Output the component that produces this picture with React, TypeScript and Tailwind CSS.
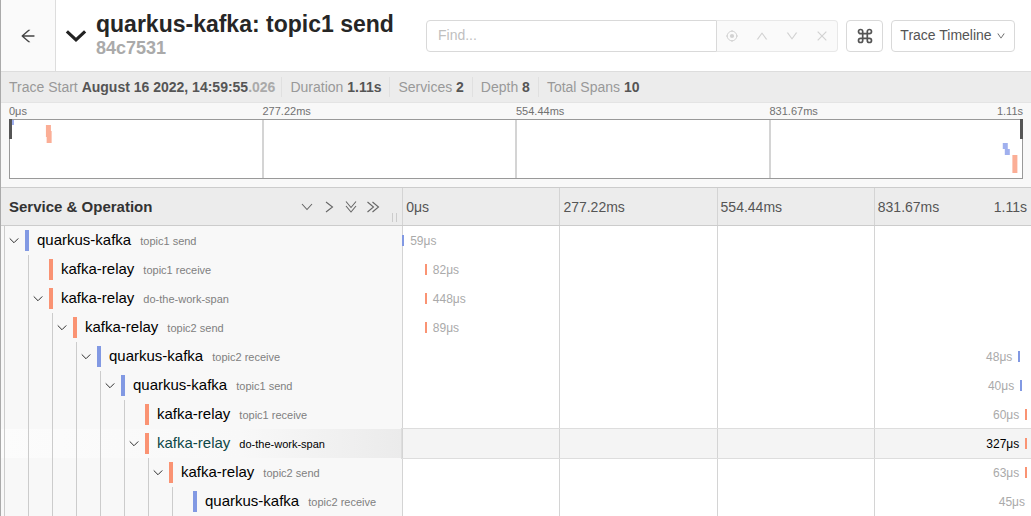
import React from "react";
import { AiOutlineArrowLeft, AiOutlineClose, AiOutlineDown, AiOutlineUp } from "react-icons/ai";

type Service = "quarkus-kafka" | "kafka-relay";

interface Span {
  service: Service;
  operation: string;
  depth: number;
  leaf?: boolean;
  duration: string;
  /** Start of the span as a percentage of the trace. */
  start: number;
  side: "left" | "right";
  active?: boolean;
}

const SPANS: Span[] = [
  { service: "quarkus-kafka", operation: "topic1 send", depth: 0, duration: "59μs", start: 0, side: "right" },
  { service: "kafka-relay", operation: "topic1 receive", depth: 1, leaf: true, duration: "82μs", start: 3.6, side: "right" },
  { service: "kafka-relay", operation: "do-the-work-span", depth: 1, duration: "448μs", start: 3.6, side: "right" },
  { service: "kafka-relay", operation: "topic2 send", depth: 2, duration: "89μs", start: 3.6, side: "right" },
  { service: "quarkus-kafka", operation: "topic2 receive", depth: 3, duration: "48μs", start: 98, side: "left" },
  { service: "quarkus-kafka", operation: "topic1 send", depth: 4, duration: "40μs", start: 98.3, side: "left" },
  { service: "kafka-relay", operation: "topic1 receive", depth: 5, leaf: true, duration: "60μs", start: 99.1, side: "left" },
  { service: "kafka-relay", operation: "do-the-work-span", depth: 5, duration: "327μs", start: 99.1, side: "left", active: true },
  { service: "kafka-relay", operation: "topic2 send", depth: 6, duration: "63μs", start: 99.1, side: "left" },
  { service: "quarkus-kafka", operation: "topic2 receive", depth: 7, leaf: true, duration: "45μs", start: 100, side: "left" },
];

const TICKS = ["0μs", "277.22ms", "554.44ms", "831.67ms"];
const barColor = (s: Service) => (s === "quarkus-kafka" ? "bg-[#8299e3]" : "bg-[#fa9373]");

function LineIcon({ d, className, width = 1.1 }: { d: string; className: string; width?: number }) {
  return (
    <svg viewBox="0 0 14 14" className={className} fill="none" stroke="currentColor" strokeWidth={width} aria-hidden="true">
      <path d={d} />
    </svg>
  );
}

function LocateIcon() {
  return (
    <svg viewBox="0 0 14 14" className="size-3.5" fill="none" stroke="currentColor" aria-hidden="true">
      <circle cx="7" cy="7" r="4.8" />
      <circle cx="7" cy="7" r="2.1" fill="currentColor" stroke="none" />
      <path d="M7 1v1.6M7 11.4V13M1 7h1.6M11.4 7H13" />
    </svg>
  );
}

function CommandIcon() {
  return (
    <svg viewBox="0 0 16 16" className="size-4" fill="none" stroke="currentColor" strokeWidth="1.7" aria-hidden="true">
      <path d="M5.7 5.7h4.6v4.6H5.7zM5.7 5.7H3.6a2.1 2.1 0 1 1 2.1-2.1zM10.3 5.7V3.6a2.1 2.1 0 1 1 2.1 2.1zM10.3 10.3h2.1a2.1 2.1 0 1 1-2.1 2.1zM5.7 10.3v2.1a2.1 2.1 0 1 1-2.1-2.1z" />
    </svg>
  );
}

function PageHeader() {
  return (
    <header className="flex h-[72px] items-stretch border-b border-[#dddddd] bg-white">
      <a href="#search" aria-label="Back to search" className="flex w-[55px] shrink-0 items-center justify-center border-r border-[#dddddd] bg-[#fafafa] text-[#444444]">
        <AiOutlineArrowLeft className="size-[18px]" />
      </a>
      <button type="button" aria-label="Toggle trace summary" className="flex w-10 shrink-0 items-center justify-center text-[#222222]">
        <LineIcon d="M1.2 4L7 9.5 12.8 4" className="size-[22px]" width={2} />
      </button>
      <div className="min-w-0 flex-1 pt-2">
        <h1 className="truncate text-[23px] leading-8 font-bold text-[#262626]">quarkus-kafka: topic1 send</h1>
        <p className="text-[18px] leading-4 font-bold text-[#aaaaaa]">84c7531</p>
      </div>
      <div className="flex shrink-0 items-center gap-2 pr-4 text-[14px] text-[#555555]">
        <div className="flex h-8">
          <input type="text" aria-label="Find" placeholder="Find..." className="w-[291px] rounded-l border border-[#d9d9d9] bg-white px-[11px] outline-none placeholder:text-[#bfbfbf]" />
          <div className="flex items-center rounded-r border border-l-0 border-[#e8e8e8] bg-[#fafafa] text-[#d2d2d2]">
            <button type="button" aria-label="Locate match" disabled className="flex w-[30px] justify-center"><LocateIcon /></button>
            <button type="button" aria-label="Previous match" disabled className="flex w-[30px] justify-center"><AiOutlineUp className="size-3.5" /></button>
            <button type="button" aria-label="Next match" disabled className="flex w-[30px] justify-center"><AiOutlineDown className="size-3.5" /></button>
            <button type="button" aria-label="Clear search" disabled className="flex w-[30px] justify-center"><AiOutlineClose className="size-3.5" /></button>
          </div>
        </div>
        <button type="button" aria-label="Keyboard shortcuts" className="flex h-8 w-[37px] items-center justify-center rounded border border-[#d9d9d9]">
          <CommandIcon />
        </button>
        <button type="button" className="flex h-8 w-[124px] items-center justify-center gap-1 rounded border border-[#d9d9d9] whitespace-nowrap">
          Trace Timeline
          <AiOutlineDown className="size-2.5" />
        </button>
      </div>
    </header>
  );
}

function Summary() {
  const items = [["Duration", "1.11s"], ["Services", "2"], ["Depth", "8"], ["Total Spans", "10"]];
  return (
    <ul className="flex h-[31px] items-center border-b border-[#e4e4e4] bg-[#ececec] px-2 text-[14px] leading-5 whitespace-nowrap text-[#999999]">
      <li className="pr-1.5">
        Trace Start <strong className="text-[#555555]">August 16 2022, 14:59:55<span className="text-[#aaaaaa]">.026</span></strong>
      </li>
      {items.map(([label, value]) => (
        <li key={label} className="border-l border-[#e0e0e0] px-2">
          {label} <strong className="text-[#555555]">{value}</strong>
        </li>
      ))}
    </ul>
  );
}

function MiniMap() {
  return (
    <section aria-label="Trace overview" className="border-b border-[#cccccc] bg-[#f8f8f8] px-2 pb-2">
      <div className="flex h-4 text-[11px] leading-4 text-[#717171]">
        {TICKS.map((t, i) => (
          <span key={t} className="flex flex-1 justify-between">
            {t}
            {i === 3 && <span>1.11s</span>}
          </span>
        ))}
      </div>
      <div className="relative flex h-[60px] border border-[#999999] bg-white">
        {TICKS.map((t, i) => (
          <div key={t} className={i < 3 ? "flex-1 border-r-2 border-[#d4d4d4]" : "flex-1"} />
        ))}
        <svg className="absolute inset-0 size-full" aria-hidden="true">
          <rect x="0" width="4" height="5" fill="#a0b0ee" />
          <rect x="3.55%" y="5" width="5" height="12" fill="#fbae96" />
          <rect x="3.62%" y="11" width="5" height="12" fill="#fbae96" />
          <rect x="98.1%" y="23" width="5" height="6" fill="#a0b0ee" />
          <rect x="98.3%" y="29" width="5" height="6" fill="#a0b0ee" />
          <rect x="99.05%" y="35" width="5" height="18" fill="#fbae96" />
        </svg>
        <span className="absolute -top-px -left-px h-5 w-[3px] bg-[#555555]" />
        <span className="absolute -top-px -right-px h-5 w-[3px] bg-[#555555]" />
      </div>
    </section>
  );
}

function TimelineHeader() {
  return (
    <div className="flex h-[38px] border-b border-[#cccccc] bg-[#ececec]">
      <div className="flex w-[38.95%] shrink-0 items-center pl-2">
        <h2 className="flex-1 pt-0.5 text-[15px] font-bold text-[#333333]">Service &amp; Operation</h2>
        <div className="flex gap-2 text-[#666666]">
          <button type="button" aria-label="Expand one level"><LineIcon d="M2 4l5 5.5L12 4" className="size-3.5" /></button>
          <button type="button" aria-label="Collapse one level"><LineIcon d="M4 2l6.5 5L4 12" className="size-3.5" /></button>
          <button type="button" aria-label="Expand all"><LineIcon d="M2 1.5l5 6 5-6M2 6l5 6 5-6" className="size-3.5" /></button>
          <button type="button" aria-label="Collapse all"><LineIcon d="M1.5 2l6 5-6 5M6.5 2l6 5-6 5" className="size-3.5" /></button>
        </div>
        <span className="mr-[5px] mb-[3px] ml-3 h-[9px] w-[5px] self-end border-x border-[#cccccc]" />
      </div>
      <div className="flex flex-1 text-[14px] text-[#555555]">
        {TICKS.map((t, i) => (
          <div key={t} className="flex flex-1 items-center justify-between border-l border-[#d4d4d4] pt-0.5 pr-1 pl-[3px]">
            <span>{t}</span>
            {i === 3 && <span>1.11s</span>}
          </div>
        ))}
      </div>
    </div>
  );
}

function SpanRow({ span }: { span: Span }) {
  const { active } = span;
  return (
    <div className="flex h-[29px]">
      <div className={`flex w-[38.95%] shrink-0 overflow-hidden whitespace-nowrap ${active ? "bg-linear-to-r from-[#fcfcfc] from-0% via-[#f8f8f8] via-60% to-[#ebebeb]" : "bg-[#f8f8f8]"}`}>
        <div className="flex shrink-0 pl-[3px]">
          {Array.from({ length: span.depth + 1 }, (_, i) => (
            <span key={i} className="flex w-6 items-center border-l border-[#cccccc]">
              {i === span.depth && !span.leaf && (
                <button type="button" aria-label={`Collapse ${span.service}`} className="flex w-[18px] justify-center text-[#222222]">
                  <LineIcon d="M2 4l5 5 5-5" className="size-3" />
                </button>
              )}
            </span>
          ))}
        </div>
        <a href="#span" className="my-1 -ml-[3px] flex items-stretch">
          <span className={`w-1 ${barColor(span.service)}`} />
          <span className={`pl-2 text-[15px] leading-5 ${active ? "text-[#0d4747]" : "text-black"}`}>
            {span.service}
            <small className={`ml-[9px] text-[11px] ${active ? "text-black" : "text-[#808080]"}`}>{span.operation}</small>
          </span>
        </a>
      </div>
      <div className={`relative flex flex-1 ${active ? "z-10 bg-[#f4f4f4] outline outline-[#dddddd]" : "bg-white"}`}>
        {TICKS.map((t) => (
          <div key={t} className="flex-1 border-l border-[#d4d4d4]" />
        ))}
        <div
          className={`absolute inset-y-0 flex items-center text-[12px] ${active ? "text-black" : "text-[#aaaaaa]"} ${span.side === "left" ? "flex-row-reverse" : ""}`}
          style={span.side === "right" ? { left: `${span.start}%` } : { right: `${Math.max(0, 99.7 - span.start)}%` }}
        >
          {span.start < 100 && <span className={`h-[11px] w-0.5 ${barColor(span.service)}`} />}
          <span className="px-1.5">{span.duration}</span>
        </div>
      </div>
    </div>
  );
}

export default function App() {
  return (
    <main className="h-screen overflow-hidden border-l border-[#aaaaaa] bg-white font-['Liberation_Sans',Arial,sans-serif]">
      <PageHeader />
      <Summary />
      <MiniMap />
      <TimelineHeader />
      {SPANS.map((s, i) => (
        <SpanRow key={i} span={s} />
      ))}
    </main>
  );
}
